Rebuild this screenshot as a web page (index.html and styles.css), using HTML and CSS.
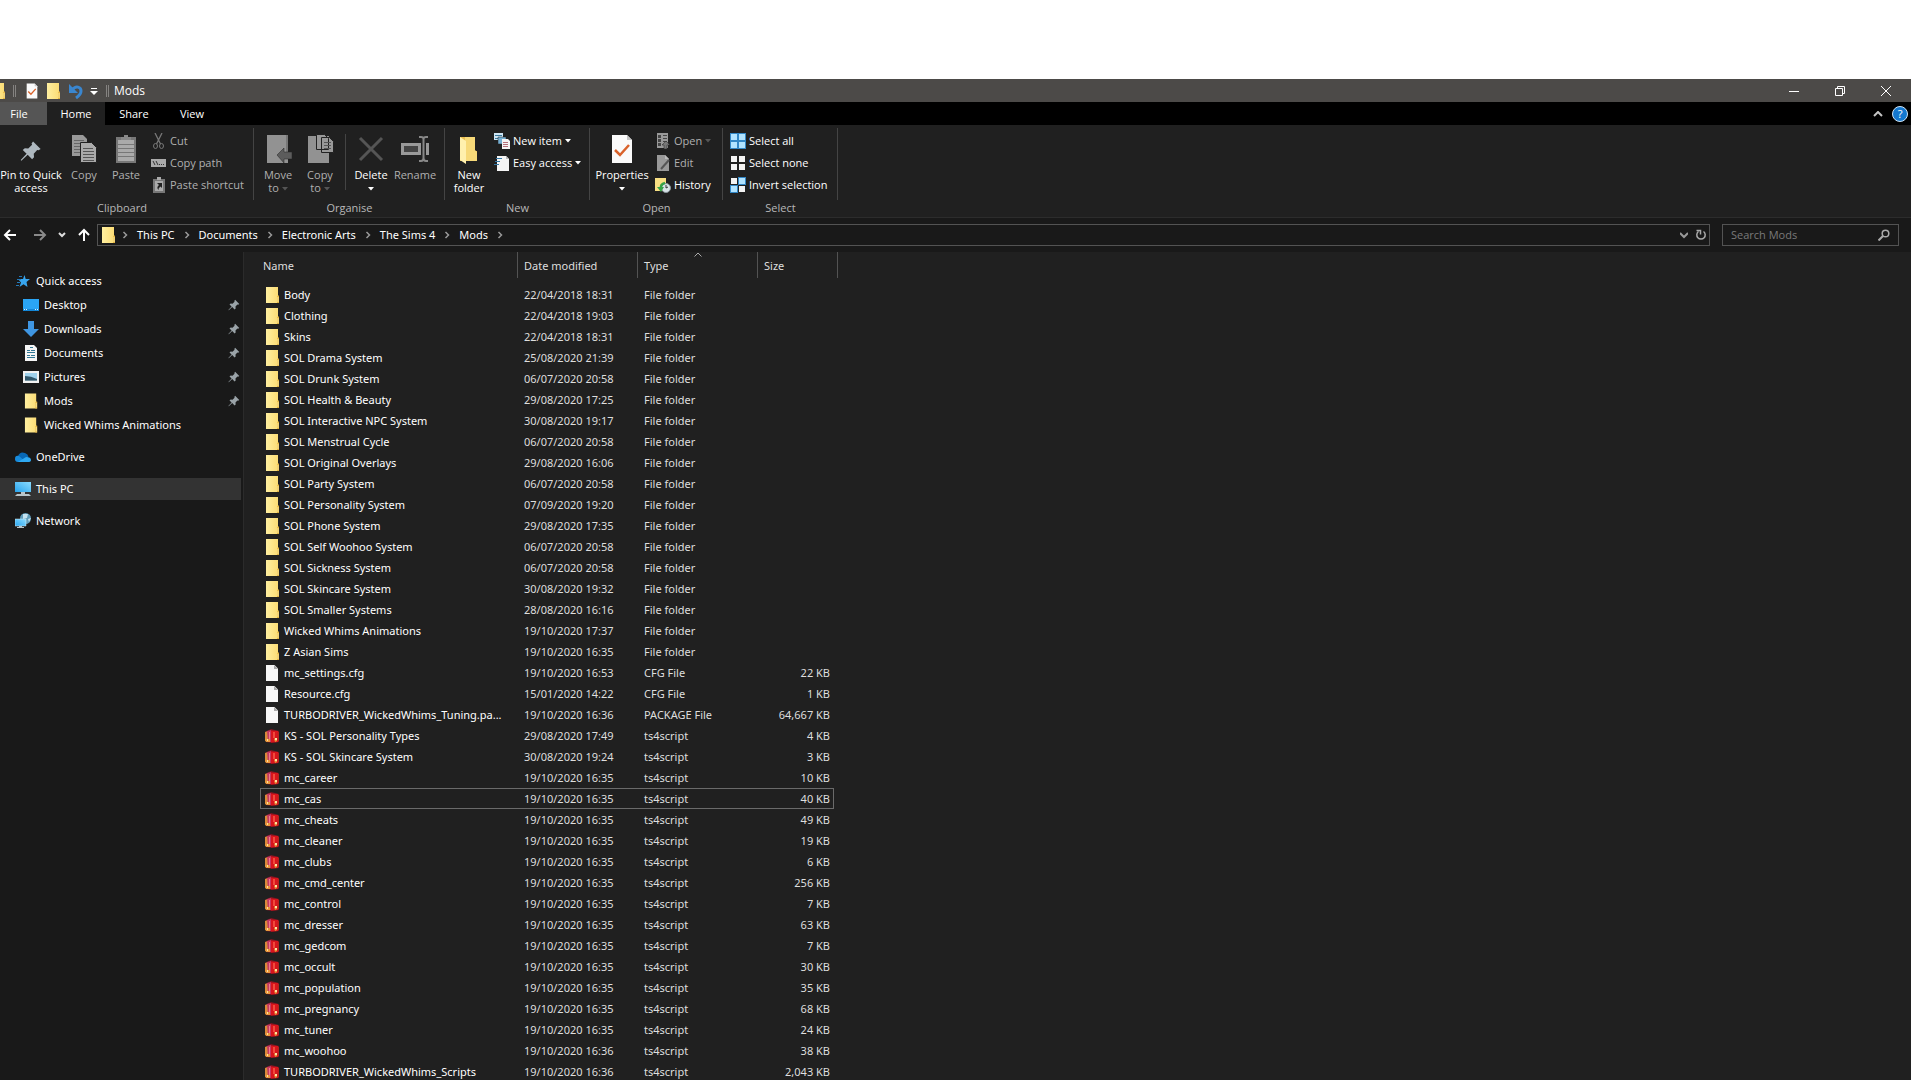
FILE: index.html
```html
<!DOCTYPE html>
<html lang="en-GB">
<head>
    <meta charset="UTF-8">
    <meta name="viewport" content="width=device-width, initial-scale=1.0">
    <title>Mods</title>
    <link rel="stylesheet" href="styles.css">
</head>
<body>
    <!-- Shared icons -->
    <svg class="sprite" aria-hidden="true">
        <defs>
            <linearGradient id="folder-fill" x1="0" x2="1"><stop offset="0" stop-color="#ffefa0"/><stop offset="1" stop-color="#fbdb72"/></linearGradient>
            <linearGradient id="screen-fill" x1="0" y1="1" x2="1" y2="0"><stop offset="0" stop-color="#28a4ee"/><stop offset="1" stop-color="#8bdcff"/></linearGradient>
            <symbol id="folder" viewBox="0 0 16 16"><path fill="url(#folder-fill)" d="M1 0h12v9h1v7H1z"/><path fill="#e3b440" d="M12 9.5l1-1h1V16h-2z"/><path fill="#fff0a8" d="M12.500 10h1v5h-1z"/></symbol>
            <symbol id="page" viewBox="0 0 16 16"><path fill="#f7f7f7" d="M1 0h8.500l3.500 3.500V16H1z"/><path fill="#aaa" d="M9 0l4 4H9z"/></symbol>
            <symbol id="script" viewBox="0 -1 16 16"><path fill="#7c1520" d="M0 3l6-3 8 2v11l-7 1-6-1z"/><path fill="#d98a3a" d="M0 3l3-1v11l-3-1z"/><path fill="#c43a62" d="M2 2l4-1v12H3z"/><path fill="#ef7a8e" d="M4 3h1v7H4z"/><path fill="#d8141c" d="M6 1.500l7 .5v11l-7 .5z"/><path fill="#f04a3c" d="M8 3h2v6H8z"/><path fill="#e8963c" d="M0 10h5v3H1zM9 9.500h3V12l-2 1z"/><path fill="#ffe0a0" d="M10 9h2v2h-2zM2 10h1v2H2z"/><path fill="#b8201c" d="M12.500 3H14v9h-1.500z"/></symbol>
            <symbol id="pin" viewBox="0 0 16 16"><path fill="currentColor" d="M9.500 1l5.500 5.500-1.500 1-1-.3L10 10l.2 2.500L8.800 14 5.600 10.800 1 15l-.5-.5L4.800 10 2 7.200 3.500 6 6 6.200 8.800 3.500l-.4-1z"/></symbol>
            <symbol id="chevron" viewBox="0 0 8 8"><path fill="none" stroke="currentColor" stroke-width="1.500" d="M2.500 1L5.500 4l-3 3"/></symbol>
            <symbol id="caret-down" viewBox="0 0 6 4"><path fill="currentColor" d="M0 0h6L3 3.500z"/></symbol>
            <symbol id="checked-page" viewBox="0 0 24 30"><path fill="#fafafa" d="M2 1h15l5 5v23H2z"/><path fill="#c4c4c4" d="M17 1l5 5h-5z"/><path fill="none" stroke="#d9622b" stroke-width="2.500" d="M5 16l5 5 9-10"/></symbol>
        </defs>
    </svg>

    <main class="window">
        <header class="titlebar">
            <div class="quick-tools">
                <svg class="icon window-icon"><use href="#folder"/></svg>
                <span class="bar"></span>
                <button aria-label="Properties"><svg class="icon"><use href="#checked-page"/></svg></button>
                <button aria-label="New folder"><svg class="icon"><use href="#folder"/></svg></button>
                <button aria-label="Undo"><svg class="icon" viewBox="0 0 16 16"><path fill="none" stroke="#3a86cf" stroke-width="3" d="M4 7c4-5 9-3 9 1 0 3-2 5-5 7"/><path fill="#3a86cf" d="M1 1v9h9z"/></svg></button>
                <button class="narrow" aria-label="Customise Quick Access Toolbar"><svg class="icon-small" viewBox="0 0 8 8"><path fill="#fff" d="M1 1h6v1H1zM0 4h8L4 8z"/></svg></button>
                <span class="bar"></span>
            </div>
            <h1>Mods</h1>
            <div class="window-buttons">
                <button aria-label="Minimise"><svg viewBox="0 0 10 10"><path d="M0 5.500h10"/></svg></button>
                <button aria-label="Restore"><svg viewBox="0 0 10 10"><path d="M.5 2.500h7v7h-7zM2.500 2V.5h7v7H8"/></svg></button>
                <button aria-label="Close"><svg viewBox="0 0 10 10"><path d="M0 0l10 10M10 0L0 10"/></svg></button>
            </div>
        </header>

        <nav class="tabs">
            <button class="tab file">File</button>
            <button class="tab active">Home</button>
            <button class="tab">Share</button>
            <button class="tab">View</button>
            <div class="tabs-end">
                <button aria-label="Collapse ribbon"><svg class="collapse" viewBox="0 0 10 6"><path fill="none" stroke="#c4c4c4" stroke-width="2" d="M1 5l4-4 4 4"/></svg></button>
                <button class="help" aria-label="Help">?</button>
            </div>
        </nav>

        <section class="ribbon">
            <div class="group clipboard">
                <div class="tools">
                    <button class="tool pin-tool"><svg class="tool-icon light"><use href="#pin"/></svg><span>Pin to Quick access</span></button>
                    <button class="tool" disabled><svg class="tool-icon" viewBox="0 0 28 30"><path fill="#999" d="M2 1h11l4 4v17H2z"/><path stroke="#666" d="M4 6.500h10M4 9.500h11M4 12.500h11M4 15.500h11M4 18.500h11"/><path fill="#aaa" stroke="#222" d="M10.500 8.500h11l5 5v15h-16z"/><path stroke="#555" d="M13 14.500h10M13 17.500h11M13 20.500h11M13 23.500h11M13 26.500h11"/></svg><span>Copy</span></button>
                    <button class="tool" disabled><svg class="tool-icon" viewBox="0 0 28 30"><path fill="#777" d="M4 3h20v26H4z"/><path fill="#aaa" d="M6 6h16v21H6z"/><path fill="#888" d="M9 3h3V1h4v2h3v3H9z"/><path stroke="#777" d="M6 10.500h16M6 14.500h16M6 18.500h16M6 22.500h16"/></svg><span>Paste</span></button>
                    <div class="tool-list">
                        <button disabled><svg class="icon" viewBox="0 0 16 16"><path fill="none" stroke="#777" stroke-width="1.300" d="M4 0l5.500 11M11 0L5.500 11"/><ellipse cx="4.500" cy="13" rx="2" ry="2.500" fill="none" stroke="#777"/><ellipse cx="10.500" cy="13" rx="2" ry="2.500" fill="none" stroke="#777"/></svg>Cut</button>
                        <button disabled><svg class="icon" viewBox="0 0 16 16"><path fill="#aaa" d="M0 4h15v8H0z"/><path stroke="#333" d="M2 6l2 4M5 6l2 4M8 9.500h1M10 9.500h1M12 9.500h1"/></svg>Copy path</button>
                        <button disabled><svg class="icon" viewBox="0 0 16 16"><path fill="#777" d="M2 2h12v14H2z"/><path fill="#aaa" d="M4 4h8v10H4zM6 0h4v3H6z"/><path fill="#222" d="M6 6h5v5L9.500 9.500Q7 11 7.500 13 5 10.500 8 8z"/></svg>Paste shortcut</button>
                    </div>
                </div>
                <h2>Clipboard</h2>
            </div>

            <div class="group organise">
                <div class="tools">
                    <button class="tool" disabled><svg class="tool-icon" viewBox="0 0 28 30"><path fill="#929292" d="M3 1h21v28H3z"/><path fill="#777" d="M22 1h2v18h-2z"/><path fill="#5c5c5c" stroke="#222" stroke-width=".5" d="M13 21l7-7v4h8v7h-8v4z"/></svg><span>Move<br>to <svg class="caret"><use href="#caret-down"/></svg></span></button>
                    <button class="tool" disabled><svg class="tool-icon" viewBox="0 0 28 30"><path fill="#929292" d="M2 2h21v27H2z"/><path fill="#999" stroke="#222" d="M10.500.5h8l4 4v11h-12zM15.500 3.500h8l4 4v11h-12z"/><path stroke="#555" d="M18 8.500h7M18 11.500h7M18 14.500h7"/></svg><span>Copy<br>to <svg class="caret"><use href="#caret-down"/></svg></span></button>
                    <span class="divider"></span>
                    <button class="tool"><svg class="tool-icon" viewBox="0 0 28 30"><path stroke="#555" stroke-width="3" d="M3 4l22 22M25 4L3 26"/></svg><span>Delete<br><svg class="caret"><use href="#caret-down"/></svg></span></button>
                    <button class="tool medium" disabled><svg class="tool-icon" viewBox="0 0 28 30"><path fill="#999" d="M0 9h28v12H0z"/><path fill="#444" d="M3 12h14v6H3z"/><path fill="none" stroke="#222" stroke-width="5" d="M22.500 5v21"/><path fill="none" stroke="#888" stroke-width="2" d="M18 3h2q2.500 0 2.500 2v19q0 3-2.500 3h-2M27 3h-2q-2.500 0-2.500 2M27 27h-2q-2.500 0-2.500-3"/></svg><span>Rename</span></button>
                </div>
                <h2>Organise</h2>
            </div>

            <div class="group new">
                <div class="tools">
                    <button class="tool"><svg class="tool-icon" viewBox="0 0 28 30"><path fill="#e9bd50" d="M5 3h15v14h2v10H5z"/><path fill="#f7d978" d="M10 3h10v13l2 2v9H10z"/><path fill="#fff0ad" d="M5 3l6 4v23l-6-4z"/></svg><span>New<br>folder</span></button>
                    <div class="tool-list">
                        <button><svg class="icon" viewBox="0 0 16 16"><path fill="#cfe6f5" d="M0 0h9v7H0z"/><path fill="#38799c" d="M1 2h7v1H1zM1 5h3v1H1z"/><path fill="#75afd2" stroke="#222" stroke-width=".5" d="M4 4h8v7H4z"/><path fill="#f5f5f5" d="M8 6h6l2 2v8H8z"/><path stroke="#b5707b" d="M9 9.500h5M9 11.500h5M9 13.500h5"/></svg>New item <svg class="caret"><use href="#caret-down"/></svg></button>
                        <button><svg class="icon" viewBox="0 0 16 16"><path fill="#f5f5f5" d="M3 1h9l3 3v12H3z"/><path fill="#bbb" d="M12 1l3 3h-3z"/><path stroke="#3477a4" d="M2 3.500h6M1 6.500h5M0 9.500h5"/></svg>Easy access <svg class="caret"><use href="#caret-down"/></svg></button>
                    </div>
                </div>
                <h2>New</h2>
            </div>

            <div class="group open">
                <div class="tools">
                    <button class="tool wide"><svg class="tool-icon"><use href="#checked-page"/></svg><span>Properties<br><svg class="caret"><use href="#caret-down"/></svg></span></button>
                    <div class="tool-list">
                        <button disabled><svg class="icon" viewBox="0 0 16 16"><path fill="#999" d="M2 0h11v15H2z"/><path fill="#444" d="M3 2h3v3H3zM3 6h3v3H3zM3 10h3v3H3zM8 2h4v1H8zM8 5h4v1H8zM8 8h4v1H8z"/><path fill="#777" stroke="#222" stroke-width=".5" d="M11 8l4 4h-3v4h-3v-4H7z"/></svg>Open <svg class="caret"><use href="#caret-down"/></svg></button>
                        <button disabled><svg class="icon" viewBox="0 0 16 16"><path fill="#999" d="M2 0h8l4 4v12H2z"/><path fill="#bbb" d="M10 0l4 4h-4z"/><path stroke="#555" stroke-width="2" d="M14 5l-8 9"/></svg>Edit</button>
                        <button><svg class="icon" viewBox="0 0 16 16"><path fill="#f8df83" d="M0 1h11v13H0z"/><circle cx="11" cy="11" r="4.500" fill="#d9e4e8" stroke="#89969b"/><path fill="none" stroke="#333" d="M11 8v3l2-1"/><path fill="none" stroke="#36a347" stroke-width="2.500" d="M10 6Q5 7 6 12"/><path fill="#36a347" d="M2 10h7l-3 5z"/></svg>History</button>
                    </div>
                </div>
                <h2>Open</h2>
            </div>

            <div class="group select">
                <div class="tools">
                    <div class="tool-list">
                        <button><svg class="icon" viewBox="0 0 16 16"><path fill="#3287c6" d="M0 0h16v16H0z"/><path fill="#b1e3ff" d="M1 1h6v6H1zM9 1h6v6H9zM1 9h6v6H1zM9 9h6v6H9z"/></svg>Select all</button>
                        <button><svg class="icon" viewBox="0 0 16 16"><path fill="#f3f3f3" d="M1 1h6v6H1zM9 1h6v6H9zM1 9h6v6H1zM9 9h6v6H9z"/></svg>Select none</button>
                        <button><svg class="icon" viewBox="0 0 16 16"><path fill="#3287c6" d="M8 0h8v8H8zM0 8h8v8H0z"/><path fill="#f3f3f3" d="M1 1h6v6H1zM9 9h6v6H9z"/><path fill="#b1e3ff" d="M9 1h6v6H9zM1 9h6v6H1z"/></svg>Invert selection</button>
                    </div>
                </div>
                <h2>Select</h2>
            </div>
        </section>

        <div class="location">
            <div class="history">
                <button aria-label="Back"><svg class="icon" viewBox="0 0 16 16"><path fill="none" stroke="#fff" stroke-width="2" d="M14 8H3M8 3L3 8l5 5"/></svg></button>
                <button class="forward" aria-label="Forward"><svg class="icon" viewBox="0 0 16 16"><path fill="none" stroke="#8a8a8a" stroke-width="2" d="M2 8h11M8 3l5 5-5 5"/></svg></button>
                <button aria-label="Recent locations"><svg class="icon-small" viewBox="0 0 8 8"><path fill="none" stroke="#ddd" stroke-width="2" d="M1 2l3 3 3-3"/></svg></button>
                <button aria-label="Up"><svg class="icon" viewBox="0 0 16 16"><path fill="none" stroke="#fff" stroke-width="2" d="M8 14V3M3 8l5-5 5 5"/></svg></button>
            </div>
            <div class="address">
                <svg class="icon"><use href="#folder"/></svg>
                <svg class="chevron"><use href="#chevron"/></svg>
                <a href="#">This PC</a>
                <svg class="chevron"><use href="#chevron"/></svg>
                <a href="#">Documents</a>
                <svg class="chevron"><use href="#chevron"/></svg>
                <a href="#">Electronic Arts</a>
                <svg class="chevron"><use href="#chevron"/></svg>
                <a href="#">The Sims 4</a>
                <svg class="chevron"><use href="#chevron"/></svg>
                <a href="#">Mods</a>
                <svg class="chevron"><use href="#chevron"/></svg>
                <div class="address-end">
                    <button aria-label="Previous locations"><svg class="icon-small" viewBox="0 0 8 8"><path fill="none" stroke="#999" stroke-width="2" d="M0 2l4 4 4-4"/></svg></button>
                    <button aria-label="Refresh"><svg class="icon-medium" viewBox="0 0 12 12"><path fill="none" stroke="#aaa" stroke-width="1.500" d="M8.500 2.500a4.200 4.200 0 1 1-5 0M1.500 1.500h4v4"/></svg></button>
                </div>
            </div>
            <label class="search">
                <input type="text" placeholder="Search Mods" aria-label="Search Mods">
                <svg class="icon-medium" viewBox="0 0 12 12"><circle cx="7.500" cy="4.500" r="3.300" fill="none" stroke="#aaa" stroke-width="1.500"/><path stroke="#aaa" stroke-width="2" d="M5 7l-4.500 4.500"/></svg>
            </label>
        </div>

        <div class="content">
            <aside class="sidebar">
                <ul>
                    <li><a href="#"><svg class="icon" viewBox="0 0 16 16"><path fill="#37a6ef" d="M9.500 2l1.200 4H15l-3.500 3 1 5-4-2.800L4.500 14 6 9.500 3 6h5z"/><path stroke="#2479b8" d="M4 3.500h3M2 6.500h4M2 9.500h3M1 12.500h3"/></svg>Quick access</a>
                        <ul>
                            <li><a href="#"><svg class="icon" viewBox="0 0 16 16"><path fill="#2aa5f5" d="M0 2h16v12H0z"/><path fill="#1386d7" d="M0 12h16v2H0z"/><path stroke="#dff3ff" stroke-dasharray="1" d="M1 12.500h3M12 12.500h3"/></svg>Desktop</a><svg class="pinned"><use href="#pin"/></svg></li>
                            <li><a href="#"><svg class="icon" viewBox="0 0 16 16"><path fill="#3f96e2" d="M5 0h6v8h5l-8 8-8-8h5z"/></svg>Downloads</a><svg class="pinned"><use href="#pin"/></svg></li>
                            <li><a href="#"><svg class="icon" viewBox="0 0 16 16"><path fill="#f5f5f5" d="M2 0h9l3 3v13H2z"/><path fill="none" stroke="#317795" d="M7 2.500h3M4 5.500h3M8 5.500h4M4 7.500h8M4 10.500h3M8 10.500h4M4 12.500h8"/></svg>Documents</a><svg class="pinned"><use href="#pin"/></svg></li>
                            <li><a href="#"><svg class="icon" viewBox="0 0 16 16"><path fill="#f1f1f1" d="M0 2h16v12H0z"/><path fill="#9fd1ec" d="M2 4h12v8H2z"/><path fill="#31576b" d="M2 7q6 0 12 3v2H2z"/><path fill="#73909d" d="M2 11h12v1H2z"/></svg>Pictures</a><svg class="pinned"><use href="#pin"/></svg></li>
                            <li><a href="#"><svg class="icon side-folder"><use href="#folder"/></svg>Mods</a><svg class="pinned"><use href="#pin"/></svg></li>
                            <li><a href="#"><svg class="icon side-folder"><use href="#folder"/></svg>Wicked Whims Animations</a></li>
                        </ul>
                    </li>
                    <li><a href="#"><svg class="icon" viewBox="0 0 16 16"><path fill="#0868b6" d="M3 7q2-5 7-3 3 1 3.500 4L7 12z"/><path fill="#178bdc" d="M0 10q0-4 4-3l7 6H3q-3 0-3-3z"/><path fill="#2fa9f2" d="M3 13l8-5q5 0 5 3 0 2-3 2z"/></svg>OneDrive</a></li>
                    <li class="selected"><a href="#"><svg class="icon" viewBox="0 0 16 16"><path fill="url(#screen-fill)" d="M0 1h16v10H0z"/><path fill="#b9c5ca" d="M6 11h4v2H6zM2 13h12l2 2H0z"/></svg>This PC</a></li>
                    <li><a href="#"><svg class="icon" viewBox="0 0 16 16"><circle cx="10.500" cy="5.500" r="5.500" fill="#5f9cb9"/><path fill="#c4e2ef" d="M8 1l5 0-1 4-4 1zM13 6l3-1-2 4z"/><path fill="url(#screen-fill)" stroke="#d6edf7" stroke-width=".5" d="M0 6h11v7H0z"/><path fill="#b9c5ca" d="M4 13h3v1h2v1H2v-1h2z"/></svg>Network</a></li>
                </ul>
            </aside>

            <section class="files">
                <table>
                    <colgroup><col class="col-name"><col class="col-date"><col class="col-type"><col class="col-size"></colgroup>
                    <thead>
                        <tr><th>Name</th><th>Date modified</th><th>Type<svg class="sort" viewBox="0 0 8 5"><path fill="none" stroke="#aaa" d="M.5 4.500L4 1l3.500 3.500"/></svg></th><th>Size</th></tr>
                    </thead>
                    <tbody>
                        <tr><td><svg class="icon"><use href="#folder"/></svg>Body</td><td>22/04/2018 18:31</td><td>File folder</td><td></td></tr>
                        <tr><td><svg class="icon"><use href="#folder"/></svg>Clothing</td><td>22/04/2018 19:03</td><td>File folder</td><td></td></tr>
                        <tr><td><svg class="icon"><use href="#folder"/></svg>Skins</td><td>22/04/2018 18:31</td><td>File folder</td><td></td></tr>
                        <tr><td><svg class="icon"><use href="#folder"/></svg>SOL Drama System</td><td>25/08/2020 21:39</td><td>File folder</td><td></td></tr>
                        <tr><td><svg class="icon"><use href="#folder"/></svg>SOL Drunk System</td><td>06/07/2020 20:58</td><td>File folder</td><td></td></tr>
                        <tr><td><svg class="icon"><use href="#folder"/></svg>SOL Health &amp; Beauty</td><td>29/08/2020 17:25</td><td>File folder</td><td></td></tr>
                        <tr><td><svg class="icon"><use href="#folder"/></svg>SOL Interactive NPC System</td><td>30/08/2020 19:17</td><td>File folder</td><td></td></tr>
                        <tr><td><svg class="icon"><use href="#folder"/></svg>SOL Menstrual Cycle</td><td>06/07/2020 20:58</td><td>File folder</td><td></td></tr>
                        <tr><td><svg class="icon"><use href="#folder"/></svg>SOL Original Overlays</td><td>29/08/2020 16:06</td><td>File folder</td><td></td></tr>
                        <tr><td><svg class="icon"><use href="#folder"/></svg>SOL Party System</td><td>06/07/2020 20:58</td><td>File folder</td><td></td></tr>
                        <tr><td><svg class="icon"><use href="#folder"/></svg>SOL Personality System</td><td>07/09/2020 19:20</td><td>File folder</td><td></td></tr>
                        <tr><td><svg class="icon"><use href="#folder"/></svg>SOL Phone System</td><td>29/08/2020 17:35</td><td>File folder</td><td></td></tr>
                        <tr><td><svg class="icon"><use href="#folder"/></svg>SOL Self Woohoo System</td><td>06/07/2020 20:58</td><td>File folder</td><td></td></tr>
                        <tr><td><svg class="icon"><use href="#folder"/></svg>SOL Sickness System</td><td>06/07/2020 20:58</td><td>File folder</td><td></td></tr>
                        <tr><td><svg class="icon"><use href="#folder"/></svg>SOL Skincare System</td><td>30/08/2020 19:32</td><td>File folder</td><td></td></tr>
                        <tr><td><svg class="icon"><use href="#folder"/></svg>SOL Smaller Systems</td><td>28/08/2020 16:16</td><td>File folder</td><td></td></tr>
                        <tr><td><svg class="icon"><use href="#folder"/></svg>Wicked Whims Animations</td><td>19/10/2020 17:37</td><td>File folder</td><td></td></tr>
                        <tr><td><svg class="icon"><use href="#folder"/></svg>Z Asian Sims</td><td>19/10/2020 16:35</td><td>File folder</td><td></td></tr>
                        <tr><td><svg class="icon"><use href="#page"/></svg>mc_settings.cfg</td><td>19/10/2020 16:53</td><td>CFG File</td><td>22 KB</td></tr>
                        <tr><td><svg class="icon"><use href="#page"/></svg>Resource.cfg</td><td>15/01/2020 14:22</td><td>CFG File</td><td>1 KB</td></tr>
                        <tr><td><svg class="icon"><use href="#page"/></svg>TURBODRIVER_WickedWhims_Tuning.pa...</td><td>19/10/2020 16:36</td><td>PACKAGE File</td><td>64,667 KB</td></tr>
                        <tr><td><svg class="icon"><use href="#script"/></svg>KS - SOL Personality Types</td><td>29/08/2020 17:49</td><td>ts4script</td><td>4 KB</td></tr>
                        <tr><td><svg class="icon"><use href="#script"/></svg>KS - SOL Skincare System</td><td>30/08/2020 19:24</td><td>ts4script</td><td>3 KB</td></tr>
                        <tr><td><svg class="icon"><use href="#script"/></svg>mc_career</td><td>19/10/2020 16:35</td><td>ts4script</td><td>10 KB</td></tr>
                        <tr class="focused"><td><svg class="icon"><use href="#script"/></svg>mc_cas</td><td>19/10/2020 16:35</td><td>ts4script</td><td>40 KB</td></tr>
                        <tr><td><svg class="icon"><use href="#script"/></svg>mc_cheats</td><td>19/10/2020 16:35</td><td>ts4script</td><td>49 KB</td></tr>
                        <tr><td><svg class="icon"><use href="#script"/></svg>mc_cleaner</td><td>19/10/2020 16:35</td><td>ts4script</td><td>19 KB</td></tr>
                        <tr><td><svg class="icon"><use href="#script"/></svg>mc_clubs</td><td>19/10/2020 16:35</td><td>ts4script</td><td>6 KB</td></tr>
                        <tr><td><svg class="icon"><use href="#script"/></svg>mc_cmd_center</td><td>19/10/2020 16:35</td><td>ts4script</td><td>256 KB</td></tr>
                        <tr><td><svg class="icon"><use href="#script"/></svg>mc_control</td><td>19/10/2020 16:35</td><td>ts4script</td><td>7 KB</td></tr>
                        <tr><td><svg class="icon"><use href="#script"/></svg>mc_dresser</td><td>19/10/2020 16:35</td><td>ts4script</td><td>63 KB</td></tr>
                        <tr><td><svg class="icon"><use href="#script"/></svg>mc_gedcom</td><td>19/10/2020 16:35</td><td>ts4script</td><td>7 KB</td></tr>
                        <tr><td><svg class="icon"><use href="#script"/></svg>mc_occult</td><td>19/10/2020 16:35</td><td>ts4script</td><td>30 KB</td></tr>
                        <tr><td><svg class="icon"><use href="#script"/></svg>mc_population</td><td>19/10/2020 16:35</td><td>ts4script</td><td>35 KB</td></tr>
                        <tr><td><svg class="icon"><use href="#script"/></svg>mc_pregnancy</td><td>19/10/2020 16:35</td><td>ts4script</td><td>68 KB</td></tr>
                        <tr><td><svg class="icon"><use href="#script"/></svg>mc_tuner</td><td>19/10/2020 16:35</td><td>ts4script</td><td>24 KB</td></tr>
                        <tr><td><svg class="icon"><use href="#script"/></svg>mc_woohoo</td><td>19/10/2020 16:36</td><td>ts4script</td><td>38 KB</td></tr>
                        <tr><td><svg class="icon"><use href="#script"/></svg>TURBODRIVER_WickedWhims_Scripts</td><td>19/10/2020 16:36</td><td>ts4script</td><td>2,043 KB</td></tr>
                    </tbody>
                </table>
            </section>
        </div>
    </main>
</body>
</html>
```

FILE: styles.css
```css
* {
    box-sizing: border-box;
}
body {
    margin: 0;
    padding: 79px 9px 0 0;
    height: 100vh;
    overflow: hidden;
    background: #fff;
    color: #fff;
    font: 11px/16px "Open Sans", "Noto Sans", sans-serif;
}
button, input {
    font: inherit;
    color: inherit;
    background: none;
    border: 0;
    padding: 0;
}
button {
    display: flex;
    align-items: center;
    justify-content: center;
    white-space: nowrap;
}
a {
    color: inherit;
    text-decoration: none;
}
ul {
    list-style: none;
    margin: 0;
    padding: 0;
}
h1, h2 {
    margin: 0;
    font-size: 11px;
    font-weight: 400;
}
svg {
    flex: none;
}
.sprite {
    position: absolute;
    width: 0;
    height: 0;
}
.icon {
    width: 16px;
    height: 16px;
}
.icon-medium {
    width: 12px;
    height: 12px;
}
.icon-small {
    width: 8px;
    height: 8px;
}
.window {
    display: flex;
    flex-direction: column;
    height: 100%;
    background: #191919;
}

/* Title bar */
.titlebar {
    display: flex;
    align-items: center;
    height: 23px;
    background: #4c4a48;
}
.titlebar h1 {
    font-size: 12px;
    padding-left: 5px;
}
.quick-tools {
    display: flex;
    align-items: center;
}
.quick-tools button {
    width: 22px;
}
.quick-tools .narrow {
    width: 14px;
    margin-right: 5px;
}
.window-icon {
    margin-left: -9px;
}
.bar {
    width: 3px;
    height: 12px;
    border: 1px solid #858381;
    border-width: 0 1px;
}
.window-icon + .bar {
    margin: 0 5px 0 6px;
}
.window-buttons {
    display: flex;
    margin-left: auto;
    padding-right: 2px;
}
.window-buttons button {
    width: 46px;
    height: 20px;
}
.window-buttons svg {
    width: 10px;
    height: 10px;
    fill: none;
    stroke: #fff;
}

/* Ribbon tabs */
.tabs {
    display: flex;
    height: 23px;
    background: #000;
}
.tab {
    width: 58px;
}
.tab.file {
    width: 47px;
    padding-right: 9px;
    background: #555;
}
.tab.active {
    background: #202020;
}
.tabs-end {
    display: flex;
    align-items: center;
    gap: 9px;
    margin-left: auto;
    padding-right: 3px;
}
.collapse {
    width: 10px;
    height: 6px;
}
.help {
    width: 16px;
    height: 16px;
    border: 1px solid #cfe6f8;
    border-radius: 50%;
    background: #1478cf;
}

/* Ribbon */
.ribbon {
    display: flex;
    height: 93px;
    padding-top: 3px;
    background: #202020;
    border-bottom: 1px solid #2c2c2c;
}
.group {
    position: relative;
    padding: 0 3px;
}
.group::after {
    content: "";
    position: absolute;
    top: 0;
    right: 0;
    width: 1px;
    height: 72px;
    background: #444;
}
.group h2 {
    text-align: center;
    color: #b8b8b8;
}
.clipboard {
    min-width: 254px;
    padding: 0 10px 0 0;
}
.organise {
    min-width: 191px;
}
.new {
    min-width: 145px;
}
.open {
    min-width: 133px;
}
.select {
    min-width: 115px;
}
.tools {
    display: flex;
    height: 72px;
    padding-top: 2px;
}
.tool {
    display: flex;
    flex-direction: column;
    justify-content: flex-start;
    width: 42px;
    padding-top: 4px;
    line-height: 13px;
    gap: 4px;
}
.tool.medium {
    width: 46px;
}
.tool.wide {
    width: 58px;
}
.pin-tool {
    width: 62px;
    margin-right: 1px;
    white-space: normal;
}
.tool-icon {
    width: 28px;
    height: 30px;
}
.light {
    width: 22px;
    padding-top: 4px;
    color: #aeb8bf;
}
button:disabled {
    color: #b0b0b0;
}
.tool-list {
    padding-left: 4px;
}
.tool-list button {
    height: 22px;
    gap: 3px;
}
.caret {
    width: 6px;
    height: 4px;
    vertical-align: middle;
}
button:disabled .caret {
    color: #555;
}
.divider {
    width: 1px;
    height: 56px;
    margin: 4px 4px 0;
    background: #444;
}

/* Address bar */
.location {
    display: flex;
    align-items: center;
    height: 34px;
    padding-right: 12px;
}
.history {
    display: flex;
    align-items: center;
    gap: 10px;
    width: 97px;
    padding-left: 2px;
}
.forward {
    margin-left: 4px;
}
.address, .search {
    display: flex;
    align-items: center;
    height: 22px;
    border: 1px solid #535353;
}
.address {
    flex: 1;
    gap: 8px;
    padding: 0 2px 0 3px;
    font-family: "Noto Sans", sans-serif;
}
.address .icon {
    margin-right: -4px;
}
.chevron {
    width: 8px;
    height: 8px;
    color: #999;
}
.address-end {
    display: flex;
    gap: 7px;
    margin-left: auto;
}
.search {
    width: 177px;
    margin-left: 12px;
    padding: 0 8px;
}
.search input {
    flex: 1;
    min-width: 0;
    outline: 0;
}
.search input::placeholder {
    color: #7a7a7a;
}

/* Navigation pane */
.content {
    display: flex;
    flex: 1;
    min-height: 0;
    font-family: "Noto Sans", sans-serif;
}
.sidebar {
    width: 244px;
    padding: 18px 2px 0 0;
    border-right: 1px solid #2b2b2b;
}
.sidebar li {
    margin-bottom: 10px;
}
.sidebar a {
    display: flex;
    align-items: center;
    gap: 5px;
    height: 22px;
    padding-left: 15px;
}
.sidebar li li {
    display: flex;
    align-items: center;
    justify-content: space-between;
    margin: 2px 0 0;
    padding-right: 1px;
}
.sidebar li li a {
    padding-left: 23px;
}
.sidebar .side-folder {
    padding-left: 1px;
}
.sidebar .selected {
    background: #333;
}
.pinned {
    width: 12px;
    height: 12px;
    color: #9aa3a8;
}

/* File list */
.files {
    flex: 1;
    overflow: hidden;
    padding-left: 16px;
    background: #202020;
}
table {
    width: 578px;
    table-layout: fixed;
    border-collapse: separate;
    border-spacing: 0;
}
.col-name {
    width: 258px;
}
.col-date, .col-type {
    width: 120px;
}
th {
    position: relative;
    height: 26px;
    padding: 2px 6px 0;
    font-weight: 400;
    text-align: left;
    color: #dedede;
    border-right: 1px solid #535353;
}
th:first-child {
    padding-left: 3px;
}
.sort {
    position: absolute;
    top: 0;
    left: 56px;
    width: 8px;
    height: 5px;
}
tbody::before {
    content: "";
    display: block;
    height: 6px;
}
td {
    height: 21px;
    padding: 0 6px;
    line-height: 19px;
    white-space: nowrap;
    color: #dedede;
}
td:first-child {
    padding-left: 5px;
    color: #fff;
}
td:last-child {
    text-align: right;
    padding-right: 8px;
}
td .icon {
    margin-right: 3px;
    vertical-align: -4px;
}
.focused {
    position: relative;
}
.focused td:last-child::after {
    content: "";
    position: absolute;
    inset: 0 4px 0 0;
    border: 1px solid #6a6a6a;
}
```
